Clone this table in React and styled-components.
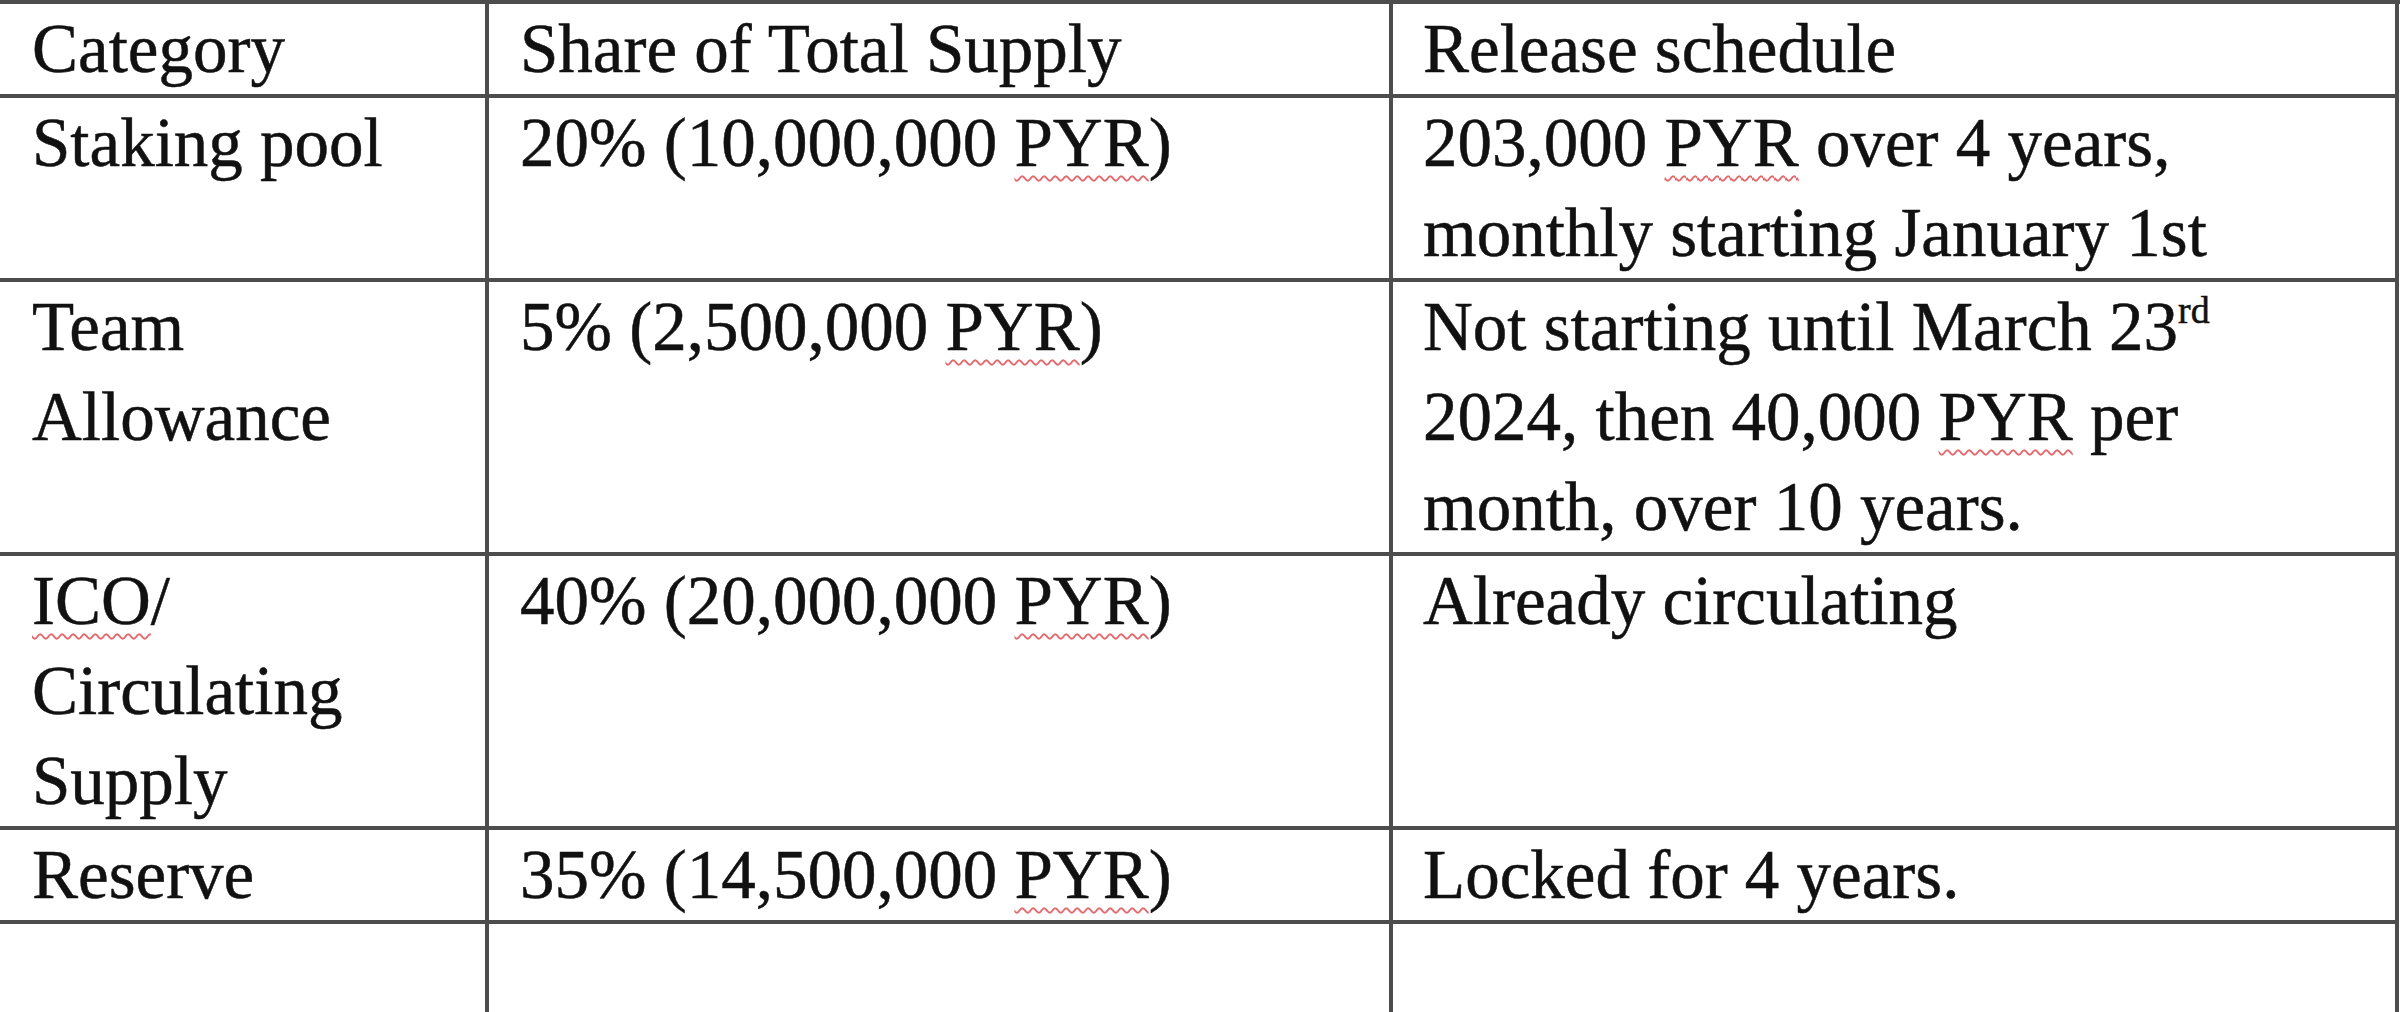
import React from "react";
import styled, { createGlobalStyle } from "styled-components";

const Global = createGlobalStyle`
  html, body {
    margin: 0;
    padding: 0;
    background: #ffffff;
  }
  body {
    font-family: "Liberation Serif", "Times New Roman", serif;
    color: #111111;
    overflow: hidden;
  }
`;

const LINE = "#4d4d4d";

const Table = styled.div`
  width: 2400px;
  border-top: 4px solid ${LINE};
  font-family: "Liberation Serif", "Times New Roman", serif;
  font-size: 69px;
  line-height: 90px;
  color: #111111;
  -webkit-text-stroke: 0.5px #111111;
`;

const Row = styled.div`
  display: grid;
  grid-template-columns: 489px 904px 1006px;
`;

const Cell = styled.div`
  box-sizing: border-box;
  border-bottom: 4px solid ${LINE};
  border-right: 4px solid ${LINE};
  padding-left: ${(p) => p.$pad}px;
  min-height: ${(p) => (p.$empty ? 94 : 0)}px;
  white-space: nowrap;
`;

const Line = styled.div`
  display: block;
`;

const Misspelt = styled.span`
  text-decoration-line: underline;
  text-decoration-style: wavy;
  text-decoration-color: #e36a6e;
  text-decoration-thickness: 2px;
  text-underline-offset: 9px;
  text-decoration-skip-ink: none;
`;

const Sup = styled.sup`
  font-size: 0.55em;
  line-height: 0;
  vertical-align: 0.7em;
`;

const pads = [32, 31, 30];

const PYR = () => <Misspelt>PYR</Misspelt>;

const rows = [
  [[ "Category" ], [ "Share of Total Supply" ], [ "Release schedule" ]],
  [
    [ "Staking pool" ],
    [ <>20% (10,000,000 <PYR />)</> ],
    [ <>203,000 <PYR /> over 4 years,</>, "monthly starting January 1st" ],
  ],
  [
    [ "Team", "Allowance" ],
    [ <>5% (2,500,000 <PYR />)</> ],
    [
      <>Not starting until March 23<Sup>rd</Sup></>,
      <>2024, then 40,000 <PYR /> per</>,
      "month, over 10 years.",
    ],
  ],
  [
    [ <><Misspelt>ICO</Misspelt>/</>, "Circulating", "Supply" ],
    [ <>40% (20,000,000 <PYR />)</> ],
    [ "Already circulating" ],
  ],
  [
    [ "Reserve" ],
    [ <>35% (14,500,000 <PYR />)</> ],
    [ "Locked for 4 years." ],
  ],
  [[], [], []],
];

export default function App() {
  return (
    <>
      <Global />
      <Table>
        {rows.map((cells, r) => (
          <Row key={r}>
            {cells.map((lines, c) => (
              <Cell key={c} $pad={pads[c]} $empty={lines.length === 0}>
                {lines.map((ln, i) => (
                  <Line key={i}>{ln}</Line>
                ))}
              </Cell>
            ))}
          </Row>
        ))}
      </Table>
    </>
  );
}
